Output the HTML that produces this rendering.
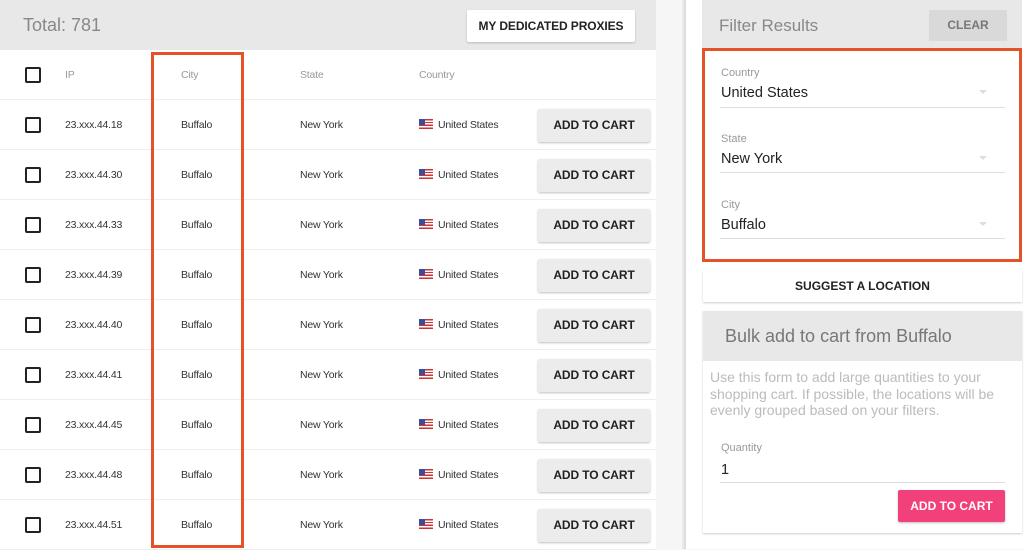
<!DOCTYPE html><html><head><style>
*{box-sizing:border-box;margin:0;padding:0}
body{width:1024px;height:549px;overflow:hidden;background:#f6f6f6;font-family:"Liberation Sans",sans-serif;position:relative}
.a{position:absolute}
.left{left:0;top:0;width:656px;height:549px;background:#fff}
.hdr{left:0;top:0;width:656px;height:50px;background:#e8e8e8}
.row{position:absolute;left:0;width:656px;height:50px;border-bottom:1px solid #eee;font-size:10.5px;color:#333;letter-spacing:-.2px}
.row span{position:absolute;top:19px}
.cb{position:absolute;left:25px;top:17px;width:16px;height:16px;border:2px solid #222;border-radius:2px}
.btn{position:absolute;left:538px;top:9px;width:112px;height:33px;background:#ececec;border-radius:2px;box-shadow:0 1px 2px rgba(0,0,0,.25);font-size:12px;font-weight:bold;color:#222;text-align:center;line-height:33px;letter-spacing:-.1px}
.flag{display:inline-block;width:14px;height:10px;vertical-align:-1px;margin-right:5px;background:repeating-linear-gradient(#c33 0 1.4px,#fff 1.4px 2.8px);position:relative}
.flag:before{content:"";position:absolute;left:0;top:0;width:6px;height:6px;background:#3a4d9a}
.lbl{font-size:11px;color:#999;position:absolute;left:721px}
.val{font-size:14.5px;color:#222;position:absolute;left:721px}
.ul{position:absolute;left:720px;width:285px;height:1px;background:#ddd}
.car{position:absolute;left:979px;width:0;height:0;border-left:4px solid transparent;border-right:4px solid transparent;border-top:4px solid #ddd}
</style></head><body>
<div class="a left"></div>
<div class="a hdr"></div>
<div class="a" style="left:23px;top:15px;font-size:18px;color:#888">Total: 781</div>
<div class="a" style="left:467px;top:10px;width:168px;height:32px;background:#fff;box-shadow:0 1px 2px rgba(0,0,0,.2);border-radius:2px;font-size:12px;font-weight:bold;text-align:center;line-height:32px;color:#222;letter-spacing:-.1px">MY DEDICATED PROXIES</div>
<div class="row" style="top:50px;color:#999"><div class="cb"></div><span style="left:65px">IP</span><span style="left:181px">City</span><span style="left:300px">State</span><span style="left:419px">Country</span></div>
<div class="row" style="top:100px"><div class="cb"></div><span style="left:65px">23.xxx.44.18</span><span style="left:181px">Buffalo</span><span style="left:300px">New York</span><span style="left:419px"><i class="flag"></i>United States</span><div class="btn">ADD TO CART</div></div>
<div class="row" style="top:150px"><div class="cb"></div><span style="left:65px">23.xxx.44.30</span><span style="left:181px">Buffalo</span><span style="left:300px">New York</span><span style="left:419px"><i class="flag"></i>United States</span><div class="btn">ADD TO CART</div></div>
<div class="row" style="top:200px"><div class="cb"></div><span style="left:65px">23.xxx.44.33</span><span style="left:181px">Buffalo</span><span style="left:300px">New York</span><span style="left:419px"><i class="flag"></i>United States</span><div class="btn">ADD TO CART</div></div>
<div class="row" style="top:250px"><div class="cb"></div><span style="left:65px">23.xxx.44.39</span><span style="left:181px">Buffalo</span><span style="left:300px">New York</span><span style="left:419px"><i class="flag"></i>United States</span><div class="btn">ADD TO CART</div></div>
<div class="row" style="top:300px"><div class="cb"></div><span style="left:65px">23.xxx.44.40</span><span style="left:181px">Buffalo</span><span style="left:300px">New York</span><span style="left:419px"><i class="flag"></i>United States</span><div class="btn">ADD TO CART</div></div>
<div class="row" style="top:350px"><div class="cb"></div><span style="left:65px">23.xxx.44.41</span><span style="left:181px">Buffalo</span><span style="left:300px">New York</span><span style="left:419px"><i class="flag"></i>United States</span><div class="btn">ADD TO CART</div></div>
<div class="row" style="top:400px"><div class="cb"></div><span style="left:65px">23.xxx.44.45</span><span style="left:181px">Buffalo</span><span style="left:300px">New York</span><span style="left:419px"><i class="flag"></i>United States</span><div class="btn">ADD TO CART</div></div>
<div class="row" style="top:450px"><div class="cb"></div><span style="left:65px">23.xxx.44.48</span><span style="left:181px">Buffalo</span><span style="left:300px">New York</span><span style="left:419px"><i class="flag"></i>United States</span><div class="btn">ADD TO CART</div></div>
<div class="row" style="top:500px"><div class="cb"></div><span style="left:65px">23.xxx.44.51</span><span style="left:181px">Buffalo</span><span style="left:300px">New York</span><span style="left:419px"><i class="flag"></i>United States</span><div class="btn">ADD TO CART</div></div>
<div class="a" style="left:151px;top:52px;width:93px;height:496px;border:3px solid #e4522a"></div>

<div class="a" style="left:682px;top:0;width:4px;height:549px;background:linear-gradient(90deg,#eee,#d8d8d8)"></div>
<div class="a" style="left:686px;top:0;width:338px;height:549px;background:#fff"></div>
<div class="a" style="left:702px;top:0;width:320px;height:48px;background:#e8e8e8"></div>
<div class="a" style="left:719px;top:16px;font-size:17px;color:#888">Filter Results</div>
<div class="a" style="left:929px;top:10px;width:78px;height:31px;background:#d9d9d9;font-size:12px;font-weight:bold;color:#777;text-align:center;line-height:31px">CLEAR</div>
<div class="a" style="left:702px;top:48px;width:320px;height:214px;background:#fff;border:3px solid #e4522a"></div>
<div class="lbl" style="top:67px">Country</div><div class="val" style="top:85px">United States</div><div class="ul" style="top:107px"></div><div class="car" style="top:90px"></div>
<div class="lbl" style="top:133px">State</div><div class="val" style="top:151px">New York</div><div class="ul" style="top:172px"></div><div class="car" style="top:156px"></div>
<div class="lbl" style="top:199px">City</div><div class="val" style="top:217px">Buffalo</div><div class="ul" style="top:238px"></div><div class="car" style="top:222px"></div>
<div class="a" style="left:703px;top:271px;width:319px;height:31px;background:#fff;box-shadow:0 1px 2px rgba(0,0,0,.2);font-size:12px;font-weight:bold;text-align:center;line-height:31px;color:#222">SUGGEST A LOCATION</div>
<div class="a" style="left:703px;top:311px;width:319px;height:222px;background:#fff;box-shadow:0 1px 2px rgba(0,0,0,.2)"></div>
<div class="a" style="left:703px;top:311px;width:319px;height:50px;background:#e8e8e8"></div>
<div class="a" style="left:725px;top:326px;font-size:18px;color:#777">Bulk add to cart from Buffalo</div>
<div class="a" style="left:710px;top:369px;width:305px;font-size:14px;line-height:16.5px;color:#bbb">Use this form to add large quantities to your shopping cart. If possible, the locations will be evenly grouped based on your filters.</div>
<div class="lbl" style="top:442px">Quantity</div><div class="val" style="top:462px">1</div><div class="ul" style="top:482px"></div>
<div class="a" style="left:898px;top:490px;width:107px;height:32px;background:#f2417a;border-radius:2px;box-shadow:0 1px 2px rgba(0,0,0,.25);font-size:12px;font-weight:bold;color:#fff;text-align:center;line-height:32px">ADD TO CART</div>
</body></html>
